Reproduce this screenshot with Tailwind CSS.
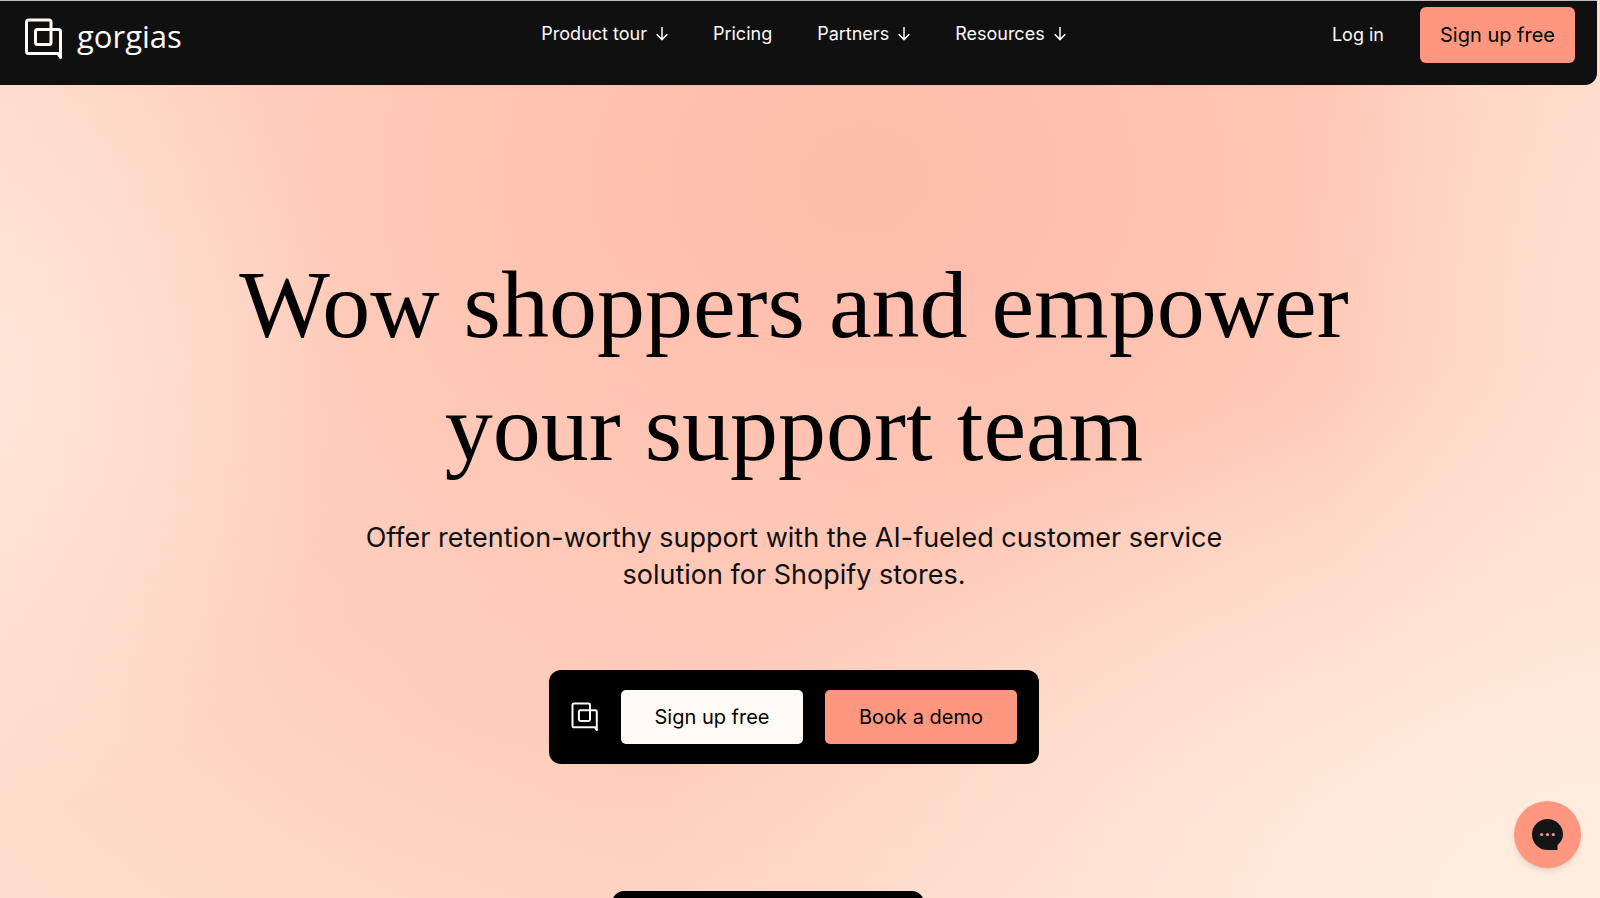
<!DOCTYPE html>
<html lang="en">
<head>
    <meta charset="UTF-8">
    <meta name="viewport" content="width=device-width, initial-scale=1.0">
    <title>Gorgias</title>
    <script src="https://cdn.jsdelivr.net/npm/@tailwindcss/browser@4"></script>
    <style>
        body {
            font-family: 'Inter', sans-serif;
        }
        .hero-bg {
            background:
                radial-gradient(ellipse 24% 50% at -2% 42%, rgba(255,234,220,0.9), rgba(255,228,212,0) 100%),
                radial-gradient(ellipse 62% 60% at 102% 100%, #ffeee0 0%, rgba(255,236,221,0.85) 35%, rgba(255,228,212,0) 100%),
                radial-gradient(ellipse 20% 75% at 102% 35%, rgba(255,228,212,0.9), rgba(255,226,208,0) 100%),
                radial-gradient(ellipse 40% 45% at 35% 72%, rgba(255,200,184,0.6), rgba(255,208,190,0) 100%),
                radial-gradient(ellipse 62% 95% at 54% 20%, #ffbbaa 0%, #ffc3b1 35%, #ffd0bf 70%, #ffdccb 100%);
        }
    </style>
</head>
<body class="bg-[#ffdccb] text-black">
<div class="hero-bg flex flex-col h-screen overflow-hidden">

    <!-- Navigation -->
    <header class="mr-[3px] h-[85px] shrink-0 flex items-start justify-between border-t border-[#b9bdbb] bg-[#101010] rounded-br-xl pl-[25px] pr-[22px] text-[#fffaf5]">
        <a href="#" class="flex flex-1 pt-[17px] gap-[14px]" aria-label="gorgias">
            <svg class="w-[38px] h-[42px] shrink-0" viewBox="0 0 38 42" fill="none" stroke="currentColor" stroke-width="3" stroke-linejoin="round" stroke-linecap="round">
                <path d="M35.500 39.500L33 35.500H3.500A2 2 0 0 1 1.500 33.500V4A2 2 0 0 1 3.500 2H24A2 2 0 0 1 26 4V24.500A2 2 0 0 1 24 26.500H12.500A2 2 0 0 1 10.500 24.500V13.500A2 2 0 0 1 12.500 11.500H33.500A2 2 0 0 1 35.500 13.500Z"/>
            </svg>
            <span class="font-['Open_Sans',sans-serif] text-[31px] leading-[36px]">gorgias</span>
        </a>

        <nav class="flex pl-[7px] pt-[20px] gap-[45px] text-[18px] leading-[24px]">
            <a href="#" class="flex items-center gap-[9px]">Product tour
                <svg class="w-[12px] h-[14px]" viewBox="0 0 12 14" fill="none" stroke="currentColor" stroke-width="1.500"><path d="M6 0V12.500M.7 7.300L6 12.600L11.300 7.300"/></svg>
            </a>
            <a href="#" class="pt-px">Pricing</a>
            <a href="#" class="flex items-center gap-[9px]">Partners
                <svg class="w-[12px] h-[14px]" viewBox="0 0 12 14" fill="none" stroke="currentColor" stroke-width="1.500"><path d="M6 0V12.500M.7 7.300L6 12.600L11.300 7.300"/></svg>
            </a>
            <a href="#" class="flex items-center gap-[9px]">Resources
                <svg class="w-[12px] h-[14px]" viewBox="0 0 12 14" fill="none" stroke="currentColor" stroke-width="1.500"><path d="M6 0V12.500M.7 7.300L6 12.600L11.300 7.300"/></svg>
            </a>
        </nav>

        <div class="flex flex-1 justify-end items-center pt-[6px] gap-[36px]">
            <a href="#" class="text-[18px] leading-[24px]">Log in</a>
            <button type="button" class="w-[155px] h-[56px] rounded-md bg-[#ff9780] text-black text-[20px]">Sign up free</button>
        </div>
    </header>

    <!-- Hero -->
    <main class="flex flex-col items-center pt-[158px] pr-3 text-center">
        <h1 class="font-['Liberation_Serif',serif] text-[96px] leading-[123px]">Wow shoppers and empower<br>your support team</h1>
        <p class="mt-[30px] text-[27px] leading-[37px] text-[#101010]">Offer retention-worthy support with the AI-fueled customer service<br>solution for Shopify stores.</p>

        <div class="mt-[77px] flex items-center gap-[22px] rounded-xl bg-black px-[22px] py-5">
            <svg class="w-[28px] h-[30px] text-[#fffaf5]" viewBox="0 0 38 42" fill="none" stroke="currentColor" stroke-width="2.800" stroke-linejoin="round" stroke-linecap="round">
                <path d="M35.500 39.500L33 35.500H3.500A2 2 0 0 1 1.500 33.500V4A2 2 0 0 1 3.500 2H24A2 2 0 0 1 26 4V24.500A2 2 0 0 1 24 26.500H12.500A2 2 0 0 1 10.500 24.500V13.500A2 2 0 0 1 12.500 11.500H33.500A2 2 0 0 1 35.500 13.500Z"/>
            </svg>
            <button type="button" class="w-[182px] h-[54px] rounded-[5px] bg-[#fffaf5] text-[20px]">Sign up free</button>
            <button type="button" class="w-[192px] h-[54px] rounded-[5px] bg-[#ff9780] text-[20px]">Book a demo</button>
        </div>
    </main>

    <!-- Top of the product preview -->
    <section class="mt-[127px] mr-16 flex justify-center">
        <div class="w-[312px] h-[200px] shrink-0 rounded-xl bg-black"></div>
    </section>
</div>

<!-- Chat launcher -->
<button type="button" aria-label="Open chat" class="fixed right-[19px] bottom-[30px] w-[67px] h-[67px] rounded-full bg-[#ff9780] shadow-md flex items-center justify-center">
    <svg class="w-[31px] h-[31px]" viewBox="0 0 31 31">
        <path d="M15.500 0A15.500 15.500 0 0 1 31 15.500C31 19.500 29.300 22.500 25.500 26V31H15.500A15.500 15.500 0 0 1 15.500 0Z" fill="#151515"/>
        <circle cx="9.700" cy="15.500" r="1.600" fill="#ff9780"/>
        <circle cx="15.500" cy="15.500" r="1.600" fill="#ff9780"/>
        <circle cx="21.300" cy="15.500" r="1.600" fill="#ff9780"/>
    </svg>
</button>

</body>
</html>
